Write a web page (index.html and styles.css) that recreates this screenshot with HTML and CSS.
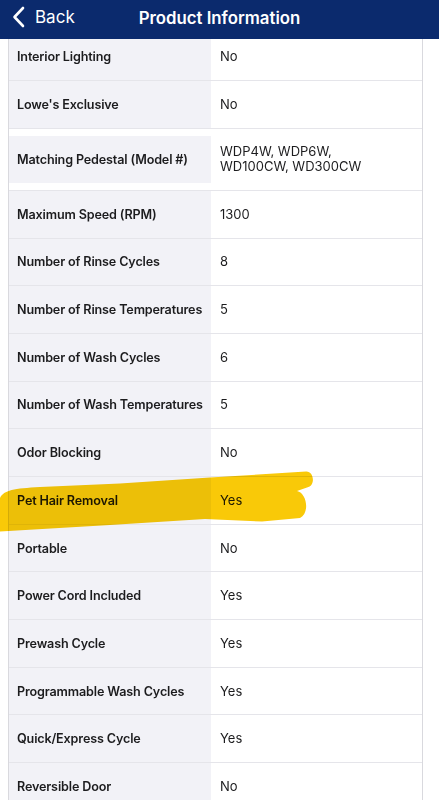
FILE: index.html
```html
<!DOCTYPE html>
<html lang="en">
<head>
  <meta charset="UTF-8">
  <meta name="viewport" content="width=device-width, initial-scale=1">
  <title>Product Information</title>
  <link rel="stylesheet" href="styles.css">
</head>
<body>
  <header class="nav">
    <a class="nav-back" href="#">
      <svg width="14" height="22" viewBox="0 0 14 22">
        <polyline points="11,2 2.5,11 11,20" fill="none" stroke="#fff" stroke-width="2.6" stroke-linecap="round" stroke-linejoin="round"/>
      </svg>
      <span>Back</span>
    </a>
    <h1 class="nav-title">Product Information</h1>
  </header>

  <div class="spec-list">
    <div class="spec-row">
      <div class="spec-label">Interior Lighting</div>
      <div class="spec-value">No</div>
    </div>
    <div class="spec-row">
      <div class="spec-label">Lowe's Exclusive</div>
      <div class="spec-value">No</div>
    </div>
    <div class="spec-row">
      <div class="spec-label">Matching Pedestal (Model #)</div>
      <div class="spec-value multi">WDP4W, WDP6W,<br>WD100CW, WD300CW</div>
    </div>
    <div class="spec-row">
      <div class="spec-label">Maximum Speed (RPM)</div>
      <div class="spec-value">1300</div>
    </div>
    <div class="spec-row">
      <div class="spec-label">Number of Rinse Cycles</div>
      <div class="spec-value">8</div>
    </div>
    <div class="spec-row">
      <div class="spec-label">Number of Rinse Temperatures</div>
      <div class="spec-value">5</div>
    </div>
    <div class="spec-row">
      <div class="spec-label">Number of Wash Cycles</div>
      <div class="spec-value">6</div>
    </div>
    <div class="spec-row">
      <div class="spec-label">Number of Wash Temperatures</div>
      <div class="spec-value">5</div>
    </div>
    <div class="spec-row">
      <div class="spec-label">Odor Blocking</div>
      <div class="spec-value">No</div>
    </div>
    <div class="spec-row marked">
      <div class="spec-label">Pet Hair Removal</div>
      <div class="spec-value">Yes</div>
      <!-- highlighter stroke drawn over the row -->
      <svg class="marker" width="320" height="65" viewBox="0 470 320 65">
        <path d="M0 498 C4 490 14 488.5 40 487 L120 483.5 L210 477.5 L306 471.5 C314 471 316 486 307 487.5 L297 491 C307 493 310 513 300 518 L262 521.5 L205 519 L110 525 L0 531.5 Z" fill="#f9c908"/>
      </svg>
    </div>
    <div class="spec-row">
      <div class="spec-label">Portable</div>
      <div class="spec-value">No</div>
    </div>
    <div class="spec-row">
      <div class="spec-label">Power Cord Included</div>
      <div class="spec-value">Yes</div>
    </div>
    <div class="spec-row">
      <div class="spec-label">Prewash Cycle</div>
      <div class="spec-value">Yes</div>
    </div>
    <div class="spec-row">
      <div class="spec-label">Programmable Wash Cycles</div>
      <div class="spec-value">Yes</div>
    </div>
    <div class="spec-row">
      <div class="spec-label">Quick/Express Cycle</div>
      <div class="spec-value">Yes</div>
    </div>
    <div class="spec-row">
      <div class="spec-label">Reversible Door</div>
      <div class="spec-value">No</div>
    </div>
  </div>
</body>
</html>
```

FILE: styles.css
```css
body {
  margin: 0;
  font-family: Inter, "Liberation Sans", Arial, sans-serif;
  background: #fff;
  color: #1c1c1e;
  overflow: hidden;
}

.nav {
  position: sticky;
  top: 0;
  z-index: 2;
  height: 35px;
  padding-bottom: 4px;
  display: flex;
  align-items: center;
  justify-content: center;
  background: #0b2a6d;
  color: #fff;
}

.nav-back {
  position: absolute;
  left: 12px;
  top: 6px;
  display: flex;
  align-items: center;
  gap: 9px;
  color: #fff;
  text-decoration: none;
  font-size: 17px;
}

.nav-title {
  margin: 0;
  font-size: 16.8px;
  font-weight: 600;
}

.spec-list {
  margin: -5.5px 16px 0 8px;
  border-left: 1px solid #d9d9de;
  border-right: 1px solid #d9d9de;
}

.spec-row {
  display: grid;
  grid-template-columns: 202px 1fr;
  min-height: 46.7px;
  border-bottom: 1px solid #e5e5ea;
  font-size: 13px;
}

.spec-label {
  align-self: center;
  height: 46.7px;
  display: flex;
  align-items: center;
  padding-left: 8px;
  background: #f2f2f7;
  font-weight: 600;
  font-size: 12.6px;
  letter-spacing: -0.15px;
  white-space: nowrap;
}

.spec-value {
  align-self: center;
  padding: 0 9px;
  line-height: 15px;
}

.spec-value.multi {
  padding: 15.5px 9px;
}

.marked {
  position: relative;
}

.marker {
  position: absolute;
  left: -9px;
  top: -7px;
  mix-blend-mode: multiply;
  pointer-events: none;
}
```
